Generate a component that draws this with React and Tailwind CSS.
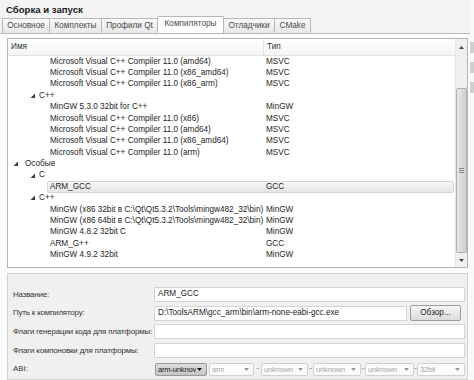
import React from "react";

const F = { fontFamily: '"Liberation Sans", Arial, sans-serif' };

function Arrow() {
  return (
    <svg width="6" height="6" viewBox="0 0 6 6" className="shrink-0">
      <polygon points="5,0.5 5,5 0.5,5" fill="#3c3c3c" />
    </svg>
  );
}

const rows = [
  { lvl: 2, name: "Microsoft Visual C++ Compiler 11.0 (amd64)", type: "MSVC" },
  { lvl: 2, name: "Microsoft Visual C++ Compiler 11.0 (x86_amd64)", type: "MSVC" },
  { lvl: 2, name: "Microsoft Visual C++ Compiler 11.0 (x86_arm)", type: "MSVC" },
  { lvl: 1, name: "C++", group: true },
  { lvl: 2, name: "MinGW 5.3.0 32bit for C++", type: "MinGW" },
  { lvl: 2, name: "Microsoft Visual C++ Compiler 11.0 (x86)", type: "MSVC" },
  { lvl: 2, name: "Microsoft Visual C++ Compiler 11.0 (amd64)", type: "MSVC" },
  { lvl: 2, name: "Microsoft Visual C++ Compiler 11.0 (x86_amd64)", type: "MSVC" },
  { lvl: 2, name: "Microsoft Visual C++ Compiler 11.0 (arm)", type: "MSVC" },
  { lvl: 0, name: "Особые", group: true },
  { lvl: 1, name: "C", group: true },
  { lvl: 2, name: "ARM_GCC", type: "GCC", sel: true },
  { lvl: 1, name: "C++", group: true },
  { lvl: 2, name: "MinGW (x86 32bit в C:\\Qt\\Qt5.3.2\\Tools\\mingw482_32\\bin)", type: "MinGW" },
  { lvl: 2, name: "MinGW (x86 64bit в C:\\Qt\\Qt5.3.2\\Tools\\mingw482_32\\bin)", type: "MinGW" },
  { lvl: 2, name: "MinGW 4.8.2 32bit C", type: "MinGW" },
  { lvl: 2, name: "ARM_G++", type: "GCC" },
  { lvl: 2, name: "MinGW 4.9.2 32bit", type: "MinGW" },
];

function Row({ r }) {
  if (r.group) {
    const pl = r.lvl === 0 ? "pl-[5px]" : "pl-[22px]";
    const gap = r.lvl === 0 ? "gap-[6px]" : "gap-[3px]";
    return (
      <div className={`h-[11.4px] flex items-center ${pl} ${gap}`}>
        <Arrow />
        <span>{r.name}</span>
      </div>
    );
  }
  return (
    <div className="h-[11.4px] flex items-center pl-[42px]">
      <div
        className={`flex-1 h-full flex items-center whitespace-nowrap ${
          r.sel
            ? "bg-gradient-to-b from-[#f6f6f6] to-[#e6e6e6] border border-[#d6d6d6] rounded-[2px] -ml-[3px] pl-[2px]"
            : ""
        }`}
      >
        <span className="w-[216px] shrink-0">{r.name}</span>
        <span>{r.type}</span>
      </div>
    </div>
  );
}

function Combo({ text, w, active }) {
  return (
    <div
      className={`${w} h-[13px] flex items-center justify-between pl-[2px] pr-[4px] border rounded-[2px] text-[7.6px] tracking-[-0.2px] ${
        active
          ? "bg-gradient-to-b from-[#dcdcdc] to-[#c6c6c6] border-[#9a9a9a] text-[#222]"
          : "bg-[#fbfbfb] border-[#cfcfcf] text-[#a8a8a8]"
      }`}
    >
      <span className="whitespace-nowrap overflow-hidden">{text}</span>
      <svg width="5" height="3" viewBox="0 0 5 3" className="shrink-0 ml-[1px]">
        <polygon points="0,0 5,0 2.5,3" fill={active ? "#111" : "#9a9a9a"} />
      </svg>
    </div>
  );
}

function Field({ label, children }) {
  return (
    <div className="flex items-center h-[15px]">
      <span className="w-[141px] shrink-0 text-[#333] whitespace-nowrap text-[7.9px] tracking-[-0.15px]">{label}</span>
      {children}
    </div>
  );
}

function Input({ value }) {
  return (
    <div className="flex-1 h-[15px] bg-white border border-[#d4d4d4] flex items-center px-[3px] text-[#222] whitespace-nowrap overflow-hidden">
      {value}
    </div>
  );
}

export default function App() {
  const tabs = [
    { t: "Основное", w: "w-[48px]" },
    { t: "Комплекты", w: "w-[53px]" },
    { t: "Профили Qt", w: "w-[57px]" },
    { t: "Компиляторы", w: "w-[67px]", sel: true },
    { t: "Отладчики", w: "w-[52px]" },
    { t: "CMake", w: "w-[37px]" },
  ];
  return (
    <div
      style={F}
      className="w-[474px] h-[380px] overflow-hidden flex bg-gradient-to-b from-[#f4f4f4] to-[#ececec] text-[8.2px] text-[#1e1e1e]"
    >
      <div className="w-[470px] flex flex-col">
        <div className="h-[18px] pl-[6px] pt-[3px] font-bold text-[9.6px] text-[#1a1a1a] leading-[13px]">
          Сборка и запуск
        </div>
        <div className="h-[15px] flex items-end pl-[2px] relative z-10">
          {tabs.map((t) => (
            <div
              key={t.t}
              className={`${t.w} flex items-center justify-center border border-[#b8b8b8] -ml-px first:ml-0 text-[#4a4a4a] ${
                t.sel
                  ? "h-[17px] bg-white border-b-white rounded-t-[2px]"
                  : "h-[15px] bg-gradient-to-b from-[#f8f8f8] to-[#e8e8e8] border-b-0"
              }`}
            >
              {t.t}
            </div>
          ))}
        </div>
        <div className="flex-1 bg-[#fcfcfc] border-t border-[#b8b8b8] pl-[7px] pr-[2px] pt-[4px] flex flex-col">
          <div className="h-[230px] border border-[#b4b4b4] bg-white flex">
            <div className="flex-1 flex flex-col">
              <div className="h-[17px] shrink-0 flex items-center border-b border-[#e2e2e2] bg-gradient-to-b from-white to-[#f4f4f4] text-[#333]">
                <span className="w-[256px] pl-[3px] border-r border-[#e4e4e4] h-full flex items-center">Имя</span>
                <span className="pl-[3px]">Тип</span>
              </div>
              <div className="flex flex-col pr-[1px]">
                {rows.map((r, i) => (
                  <Row key={i} r={r} />
                ))}
              </div>
            </div>
            <div className="w-[12px] shrink-0 bg-[#f0f0f0] border-l border-[#e6e6e6] flex flex-col items-center">
              <div className="h-[16px] flex items-center justify-center">
                <svg width="5" height="3" viewBox="0 0 5 3">
                  <polygon points="0,3 5,3 2.5,0" fill="#444" />
                </svg>
              </div>
              <div className="h-[33px]" />
              <div className="w-[11px] h-[165px] rounded-[2px] border border-[#b0b0b0] bg-gradient-to-r from-[#e8e8e8] to-[#d0d0d0] flex items-center justify-center">
                <div className="flex flex-col gap-[1px]">
                  <div className="w-[5px] h-px bg-[#888]" />
                  <div className="w-[5px] h-px bg-[#888]" />
                  <div className="w-[5px] h-px bg-[#888]" />
                </div>
              </div>
              <div className="flex-1 flex items-center justify-center">
                <svg width="5" height="3" viewBox="0 0 5 3">
                  <polygon points="0,0 5,0 2.5,3" fill="#444" />
                </svg>
              </div>
            </div>
          </div>
          <div className="h-[5px]" />
          <div className="flex-1 border border-[#d2d2d2] bg-[#f0f0f0] pl-[5px] pr-[2px] pt-[13px] flex flex-col gap-[3.7px]">
            <Field label="Название:">
              <Input value="ARM_GCC" />
            </Field>
            <Field label="Путь к компилятору:">
              <Input value="D:\ToolsARM\gcc_arm\bin\arm-none-eabi-gcc.exe" />
              <div className="w-[51px] h-[16px] ml-[3px] mr-[4px] border border-[#9c9c9c] rounded-[2px] bg-gradient-to-b from-[#f6f6f6] to-[#dcdcdc] flex items-center justify-center text-[#222]">
                Обзор...
              </div>
            </Field>
            <Field label="Флаги генерации кода для платформы:">
              <Input value="" />
            </Field>
            <Field label="Флаги компоновки для платформы:">
              <Input value="" />
            </Field>
            <div className="flex items-center h-[15px]">
              <span className="w-[142px] shrink-0 text-[#333] text-[7.9px]">ABI:</span>
              <div className="flex items-center text-[#888]">
                <Combo text="arm-unknov" w="w-[52px]" active />
                <div className="w-[2px]" />
                <Combo text="arm" w="w-[45px]" />
                <span className="w-[7px] text-center">-</span>
                <Combo text="unknown" w="w-[47px]" />
                <span className="w-[5px] text-center">-</span>
                <Combo text="unknown" w="w-[48px]" />
                <span className="w-[4px] text-center">-</span>
                <Combo text="unknown" w="w-[49px]" />
                <span className="w-[3px] text-center">-</span>
                <Combo text="32bit" w="w-[48px]" />
              </div>
            </div>
          </div>
        </div>
      </div>
      <div className="w-[4px] flex flex-col pt-[42px] gap-[9px] bg-[#f8f8f8]">
        <div className="h-[11px] bg-[#cfcfcf]" />
        <div className="h-[11px] bg-[#cfcfcf]" />
        <div className="h-[11px] bg-[#cfcfcf]" />
      </div>
    </div>
  );
}
